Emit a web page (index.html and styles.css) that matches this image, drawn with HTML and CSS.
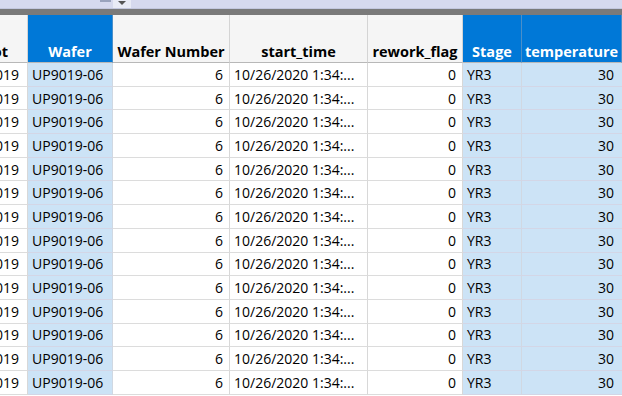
FILE: index.html
```html
<!DOCTYPE html>
<html>
<head>
<meta charset="utf-8">
<link rel="stylesheet" href="styles.css">
</head>
<body>
<div class="topbar">
  <div class="thumb"></div>
  <div class="dropbtn"><svg width="8" height="5" viewBox="0 0 8 5"><path d="M0 0 L8 0 L4 4 Z" fill="#555"/></svg></div>
</div>
<div class="band"></div>
<div class="grid" id="grid">
  <div class="h c0"><span class="lot">ot</span></div>
  <div class="h sel">Wafer</div>
  <div class="h">Wafer Number</div>
  <div class="h">start_time</div>
  <div class="h">rework_flag</div>
  <div class="h sel">Stage</div>
  <div class="h sel">temperature</div>
</div>
<script src="app.js"></script>
</body>
</html>
```
FILE: app.js
```js
const g = document.getElementById('grid');
for (let i = 0; i < 14; i++) {
  const cells = [
    ['d c0 r', '019'],
    ['d sel l', 'UP9019-06'],
    ['d r', '6'],
    ['d l', '10/26/2020 1:34:...'],
    ['d r', '0'],
    ['d sel l', 'YR3'],
    ['d sel r last', '30']
  ];
  for (const [cls, txt] of cells) {
    const d = document.createElement('div');
    d.className = cls;
    d.textContent = txt;
    g.appendChild(d);
  }
}
```
FILE: styles.css
```css
html, body {
  margin: 0;
  padding: 0;
  background: #ffffff;
  overflow: hidden;
}
body {
  width: 622px;
  height: 396px;
  font-family: "Open Sans", "Noto Sans", sans-serif;
  color: #000;
}
.topbar {
  height: 9px;
  background: #d6d9ee;
  position: relative;
  box-shadow: inset 0 -1px 0 #c3c7de;
}
.thumb {
  position: absolute;
  left: 100px;
  top: 0;
  width: 11px;
  height: 2px;
  background: #9aa3bd;
}
.dropbtn {
  position: absolute;
  left: 113px;
  top: 0;
  width: 18px;
  height: 8px;
  background: #e9ebf6;
  display: flex;
  justify-content: center;
  padding-top: 1px;
  box-sizing: border-box;
}
.band {
  height: 6px;
  background: #7a7a7a;
}
.grid {
  display: grid;
  grid-template-columns: 28px 85px 117px 138px 95px 59px 100px;
  grid-template-rows: 48px;
  grid-auto-rows: 23.7px;
  width: 622px;
}
.h {
  background: #f5f5f5;
  border-right: 1px solid #d4d4d4;
  border-bottom: 1px solid #b8b8b8;
  font-weight: 700;
  font-size: 14.5px;
  display: flex;
  align-items: flex-end;
  justify-content: center;
  padding-bottom: 1px;
  box-sizing: border-box;
  overflow: hidden;
  white-space: nowrap;
}
.h.sel {
  background: #0078d7;
  color: #fff;
  border-right-color: #4a8fc9;
}
.h.c0 {
  justify-content: flex-end;
}
.lot {
  margin-right: 19px;
}
.d {
  font-size: 14px;
  border-right: 1px solid #d8d8d8;
  border-bottom: 1px solid #dcdcdc;
  display: flex;
  align-items: center;
  box-sizing: border-box;
  white-space: nowrap;
  overflow: hidden;
  padding: 0 6px 0 4px;
}
.d.sel {
  background: #cce3f6;
  border-bottom-color: #d3d6e6;
  border-right-color: #d0d8e2;
}
.d.r {
  justify-content: flex-end;
}
.d.c0 {
  padding-right: 8px;
}
.d.last {
  border-right: 0;
  padding-right: 8px;
}
```
